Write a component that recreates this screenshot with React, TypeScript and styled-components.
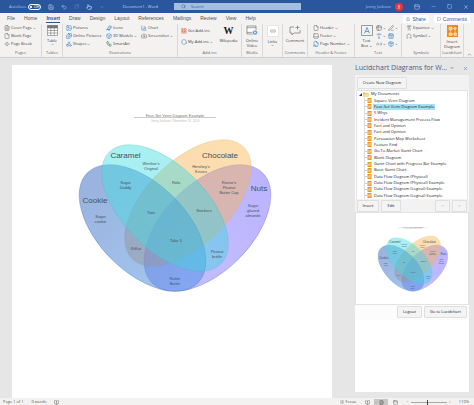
import React from "react";
import styled, { createGlobalStyle } from "styled-components";
import {
  Save, Undo2, RotateCw, Pointer, ChevronDown, ChevronUp, Search, Minus, Square, X, PanelTop, Share, MessageSquare,
  FileText, File as FileIcon, SeparatorHorizontal, Image as ImageIcon, Images, Shapes, Bird, Box as Cube, Workflow,
  ChartColumn, Camera, LayoutGrid, Hexagon, Link2, Omega, Pi, PanelBottom, FileDigit, Table2, PenLine, CalendarDays,
  CaseSensitive, Type, Package, Focus, BookOpen,
} from "lucide-react";

const Global = createGlobalStyle`
  * { box-sizing: border-box; }
  html, body, #root { height: 100%; }
  body { margin: 0; font-family: "Open Sans", "Noto Sans", sans-serif; font-size: 4px; line-height: 6px; color: #444; background: #e6e6e6; }
  button, input { font: inherit; color: inherit; padding: 0; margin: 0; border: 0; background: none; }
  ul { list-style: none; margin: 0; padding: 0; }
  svg { display: block; flex: none; }
`;
const Window = styled.div`display: flex; flex-direction: column; min-height: 100vh;`;

const TitleBar = styled.header`
  display: grid; grid-template-columns: 174fr 127fr 173fr; align-items: center;
  height: 13px; background: #2a569d; color: #c4d3ea;
`;
const QuickTools = styled.div`display: flex; align-items: center; gap: 7px; padding-left: 9px;`;
const AutoSave = styled.label`display: flex; align-items: center; gap: 2px; color: #a9c0e2;`;
const Toggle = styled.button`
  display: flex; align-items: center; gap: 2px; width: 13px; height: 6px; padding: 0 1px;
  border: 1px solid #fff; border-radius: 3px; color: #fff; line-height: 4px;
  &::before { content: ""; width: 2px; height: 2px; border-radius: 50%; background: #fff; }
`;
const IconButton = styled.button`display: grid; place-items: center; min-width: 5px;`;
const DocName = styled.span`margin-left: auto; padding-right: 16px; white-space: nowrap;`;
const SearchBox = styled.label`
  display: flex; align-items: center; gap: 5px; height: 7px; padding-left: 7px; background: #a5bddf; color: #2b579a;
  input { min-width: 0; flex: 1; outline: 0; }
  input::placeholder { color: #315a96; opacity: 1; }
`;
const WindowTools = styled.div`display: flex; align-items: center; justify-content: flex-end; gap: 11px; padding-right: 5px;`;
const Account = styled.button`display: flex; align-items: center; gap: 4px; color: #b3c7e6;`;
const Avatar = styled.span`width: 8px; height: 8px; border-radius: 50%; background: #e8353f; color: #fff; line-height: 8px; text-align: center;`;

const TabBar = styled.nav`display: flex; align-items: center; height: 11px; padding: 0 4px 0 7px; background: #f3f2f1;`;
const Tabs = styled.div`display: flex; flex: 1; gap: 9px; font-family: "Liberation Sans", sans-serif; font-size: 5px;`;
const Tab = styled.button<{ $active?: boolean }>`
  height: 9px; line-height: 7px; border-bottom: 1px solid ${p => (p.$active ? "#2b579a" : "transparent")};
  color: ${p => (p.$active ? "#2b579a" : "#555")}; font-weight: ${p => (p.$active ? 700 : 400)};
`;
const ActionButton = styled.button`
  display: flex; align-items: center; gap: 2px; height: 8px; padding: 0 3px; margin-left: 5px; background: #fff; color: #2b579a; border-radius: 1px;
  font-family: "Liberation Sans", sans-serif; font-size: 5px;
`;

const Ribbon = styled.section`
  display: grid; grid-template-columns: 42fr 21fr 115fr 64fr 21fr 20fr 25fr 47fr 47fr 39fr 23fr 10fr;
  height: 34px; background: #f3f2f1; border-bottom: 1px solid #d2d0ce;
`;
const Group = styled.section`
  display: flex; flex-direction: column; min-width: 0; padding-bottom: 1px; border-right: 1px solid #d9d8d7; white-space: nowrap;
  h2 { margin: 0; font-size: 4px; font-weight: 400; line-height: 6px; text-align: center; color: #666; }
`;
const GroupBody = styled.div<{ $pad?: number }>`display: flex; flex: 1; padding-left: ${p => p.$pad ?? 0}px;`;
const Stack = styled.div<{ $w?: number; $loose?: boolean }>`
  display: flex; flex-direction: column; width: ${p => (p.$w ? p.$w + "px" : "auto")};
  gap: ${p => (p.$loose ? 3 : 0)}px; padding-top: ${p => (p.$loose ? 3 : 0)}px;
`;
const SmallCommand = styled.button`
  display: flex; align-items: center; gap: 1px; height: 8px; text-align: left; white-space: nowrap;
`;
const BigCommand = styled.button`
  display: flex; flex: 1; flex-direction: column; align-items: center; justify-content: flex-start; padding-top: 1px; line-height: 5px;
  > svg, > i { margin-bottom: 2px; }
`;
const WikiMark = styled.i`height: 11px; font: 700 10px/12px "Liberation Serif", serif; color: #222;`;
const LinkTile = styled.i`display: grid; place-items: center; width: 12px; height: 12px; background: #fff; border: 1px solid #e6e6e6;`;
const Collapse = styled.button`align-self: end; justify-self: center;`;

const Work = styled.main`display: grid; grid-template-columns: minmax(0, 349fr) minmax(0, 125fr); flex: 1;`;
const Canvas = styled.div`display: flex; padding: 7px 17px 0 12px; background: #e6e6e6;`;
const Paper = styled.article`flex: 1; min-width: 0; background: #fff; svg { width: 100%; height: auto; }`;
const Panel = styled.aside`display: flex; flex-direction: column; padding: 4px 5px 6px 6px; background: #e6e6e6;`;
const PanelHeader = styled.header`
  display: flex; align-items: center; height: 12px; color: #44618f; white-space: nowrap;
  h1 { flex: 1; margin: 0; font-size: 7px; line-height: 12px; font-weight: 400; }
  button + button { margin: 0 1px 0 9px; }
`;
const PanelBody = styled.div`display: flex; flex: 1; flex-direction: column; background: #fff; margin-top: 1px;`;
const PanelBar = styled.div<{ $end?: boolean; $h: number }>`
  display: flex; align-items: center; gap: 2px; height: ${p => p.$h}px; padding: 0 2px;
  background: ${p => (p.$end ? "#fcfcfc" : "#f2f2f2")}; justify-content: ${p => (p.$end ? "flex-end" : "flex-start")};
`;
const PushButton = styled.button<{ $w: number; $faint?: boolean }>`
  width: ${p => p.$w}px; height: 12px; border: 1px solid #dfdfdf; border-radius: 1px; background: #f4f4f4;
  color: ${p => (p.$faint ? "#aaa" : "#222")}; white-space: nowrap;
`;
const Spacer = styled.span`flex: 1;`;
const TreeBox = styled.div`margin: 0 1px; border: 1px solid #e2e2e2; border-bottom: 0; padding: 0 0 0 2px;`;
const Tree = styled.ul`
  display: grid; grid-auto-rows: 1fr; height: 108px; color: #222;
  li { display: flex; align-items: center; min-height: 0; }
  li + li::before { content: ""; align-self: stretch; width: 1px; margin-left: 5px; background: #ddd; }
  li + li::after { content: ""; order: 1; width: 2px; height: 1px; background: #ccc; }
`;
const Node = styled.button<{ $on?: boolean }>`
  display: flex; order: 2; align-items: center; gap: 1px; white-space: nowrap;
  span { padding: 0 1px; background: ${p => (p.$on ? "#a5e0f3" : "transparent")}; }
`;
const Preview = styled.figure`
  margin: 0; border: 1px solid #e2e2e2; background: #fff; svg { width: 100%; height: auto; }
`;

const StatusBar = styled.footer`
  display: flex; align-items: center; gap: 8px; height: 7px; padding: 1px 5px 0 3px; background: #f3f2f1; color: #555;
`;
const ViewButton = styled.button<{ $on?: boolean }>`
  display: grid; place-items: center; width: 14px; height: 6px; margin: 0 -4px; background: ${p => (p.$on ? "#c8c6c4" : "transparent")};
`;
const ZoomControl = styled.label`display: flex; align-items: center; gap: 2px;`;
const ZoomSlider = styled.input`
  appearance: none; width: 36px; height: 5px;
  background: linear-gradient(#aaa, #aaa) center / 100% 1px no-repeat;
  &::-webkit-slider-thumb { appearance: none; width: 1px; height: 5px; background: #444; }
`;

const Down = () => <ChevronDown size={3} strokeWidth={3} />;

type CommandProps = { icon: React.ElementType; label?: string; menu?: boolean; tone?: string };
function Command({ icon: Icon, label, menu, tone = "#666" }: CommandProps) {
  return (
    <SmallCommand aria-label={label ? undefined : "Text option"}>
      <Icon size={6} strokeWidth={2} color={tone} />
      {label && <span>{label}</span>}
      {menu && <Down />}
    </SmallCommand>
  );
}

const LABELS: [number, number, string[]][] = [
  [151, 165, ["Werther's", "Original"]], [125.5, 184, ["Sugar", "Daddy"]], [176, 183.5, ["Rolo"]],
  [201, 168, ["Hershey's", "Kisses"]], [229, 183.5, ["Reese's", "Peanut", "Butter Cup"]],
  [100.5, 217.5, ["Sugar", "cookie"]], [151, 213.5, ["Twix"]], [204, 212, ["Snickers"]],
  [253, 207, ["Sugar", "glazed", "almonds"]], [176, 242, ["Take 5"]], [136, 250, ["KitKat"]],
  [217, 253, ["Peanut", "brittle"]], [175, 280, ["Nutter", "Butter"]],
];
type SetShape = { name: string; x: number; y: number; rx: number; ry: number; turn: number; from: string; to: string; alpha: number; line: string };
const SETS: SetShape[] = [
  { name: "nuts", x: 207.5, y: 228, rx: 78, ry: 44, turn: -45, from: "#8478ff", to: "#7262fb", alpha: 0.48, line: "#5a58c8" },
  { name: "chocolate", x: 188, y: 203, rx: 79, ry: 42, turn: -45, from: "#f0a860", to: "#fbb850", alpha: 0.46, line: "#e0b470" },
  { name: "cookie", x: 142.5, y: 228, rx: 78, ry: 44, turn: 45, from: "#3566bd", to: "#4690e2", alpha: 0.5, line: "#3564b5" },
  { name: "caramel", x: 165, y: 208, rx: 79, ry: 42, turn: 45, from: "#45dfe2", to: "#3fd3de", alpha: 0.46, line: "#48b8c0" },
];

function Venn({ viewBox, id }: { viewBox: string; id: string }) {
  return (
    <svg viewBox={viewBox} role="img" aria-label="Four-Set Venn Diagram Example" fontFamily="Liberation Sans, sans-serif" textAnchor="middle" fill="#45525c">
      <defs>
        {SETS.map(s => (
          <linearGradient key={s.name} id={`${id}-${s.name}`} x1={s.turn > 0 ? 0 : 0} x2="1" y1="0" y2="0">
            <stop stopColor={s.from} /><stop offset="1" stopColor={s.to} />
          </linearGradient>
        ))}
      </defs>
      <path d="M134 117.5H216" stroke="#aaa" strokeWidth=".6" />
      <text x="175" y="117" fontSize="4" fill="#777">Four-Set Venn Diagram Example</text>
      <text x="175" y="122" fontSize="3" fill="#bbb">Jenny Jackson | November 26, 2019</text>
      {SETS.map(s => (
        <ellipse key={s.name} rx={s.rx} ry={s.ry} transform={`translate(${s.x} ${s.y}) rotate(${s.turn})`} fill={`url(#${id}-${s.name})`} fillOpacity={s.alpha} stroke={s.line} strokeOpacity=".6" strokeWidth=".5" />
      ))}
      <g fontSize="8">
        <text x="125.500" y="158">Caramel</text>
        <text x="220" y="158">Chocolate</text>
        <text x="95" y="203">Cookie</text>
        <text x="259" y="191">Nuts</text>
      </g>
      <g fontSize="4">
        {LABELS.map(([x, y, lines]) => (
          <text key={lines.join()} y={y}>
            {lines.map((line, i) => <tspan key={line} x={x} dy={i ? 5 : 0}>{line}</tspan>)}
          </text>
        ))}
      </g>
    </svg>
  );
}

const GridIcon = () => (
  <svg width="11" height="11" viewBox="0 0 11 11" fill="#fff" stroke="#777" strokeWidth=".6">
    <path d="M.5.5h10v10H.5zM.5 5.500h10M.5 8h10M3.800 3v7.500M7.200 3v7.500" /><path d="M.5.5h10v2.500H.5z" fill="#777" />
  </svg>
);
const VideoIcon = () => (
  <svg width="12" height="11" viewBox="0 0 12 11" fill="#fff" stroke="#777" strokeWidth=".7">
    <path d="M1 1h9v8H1zM1 2.700h9M1 7.400h9" /><circle cx="9" cy="7.500" r="2.600" fill="#5b9bd5" stroke="#fff" /><path d="m8.300 6.300 2 1.200-2 1.200z" stroke="none" />
  </svg>
);
const CommentIcon = () => (
  <svg width="12" height="11" viewBox="0 0 12 11" fill="none" stroke="#777" strokeWidth=".7">
    <path d="M5 2H1v6h2v2l2-2h6V5" /><path d="M8.500.5v4M6.500 2.500h4" stroke="#2e9b6a" />
  </svg>
);
const TextBoxIcon = () => (
  <svg width="12" height="11" viewBox="0 0 12 11" fill="none" stroke="#777" strokeWidth=".7">
    <path d="M.5.5h11v10H.5z" /><path d="m3.500 8.500 2.500-6 2.500 6M4.400 6.500h3.200" stroke="#2f7fc4" />
  </svg>
);
const LucidIcon = () => (
  <svg width="11" height="12" viewBox="0 0 11 12">
    <path fill="#ee8a1d" d="M0 0h11v12H0z" />
    <path d="M2 2h3v3H2zM6.500 3.500 8 2l1.500 1.500L8 5zM2 8h3v2.500H2zM7 8h2.500v2.500H7zM5 3.500h1.500M8 5v3M5 9.200h2M3.500 5v3" fill="#fff" fillOpacity=".5" stroke="#fff" strokeWidth=".4" />
  </svg>
);
const DocIcon = () => (
  <svg width="5" height="5" viewBox="0 0 5 5"><path fill="#ef9420" d="M.5 0h4v5h-4z" /><path d="M1.500 1.500h2v1h-2v1h2" fill="none" stroke="#fff" strokeWidth=".4" /></svg>
);
const FolderIcon = () => (
  <svg width="6" height="5" viewBox="0 0 6 5"><path fill="#e8bd4c" d="M0 .5h2.300l.5.700H5.500v3.300H0z" /><path fill="#fbe08c" d="M.8 2H6l-.7 2.600H0z" /></svg>
);
const OpenArrow = () => <svg width="3" height="3" viewBox="0 0 3 3"><path d="M3 0v3H0z" fill="#333" /></svg>;

const DOCS = [
  "Square Venn Diagram", "Four-Set Venn Diagram Example", "5 Whys", "Incident Management Process Flow", "Fact and Opinion",
  "Fact and Opinion", "Persuasion Map Worksheet", "Feature Find", "Go-To-Market Gantt Chart", "Blank Diagram",
  "Gantt Chart with Progress Bar Example", "Basic Gantt Chart", "Data Flow Diagram (Physical)",
  "Data Flow Diagram (Physical) Example", "Data Flow Diagram (Logical) Example", "Data Flow Diagram (Logical) Example",
];
const TABS = ["File", "Home", "Insert", "Draw", "Design", "Layout", "References", "Mailings", "Review", "View", "Help"];
const BLUE = "#2f7fc4";

export default function App() {
  return (
    <Window>
      <Global />
      <TitleBar>
        <QuickTools>
          <AutoSave>AutoSave <Toggle role="switch" aria-checked={false}>Off</Toggle></AutoSave>
          <IconButton aria-label="Save"><Save size={6} /></IconButton>
          <IconButton aria-label="Undo"><Undo2 size={6} /></IconButton>
          <IconButton aria-label="Repeat"><RotateCw size={5} opacity={0.5} /></IconButton>
          <IconButton aria-label="Touch mode"><Pointer size={6} /></IconButton>
          <IconButton aria-label="Customize"><ChevronDown size={4} /></IconButton>
          <DocName>Document1 - Word</DocName>
        </QuickTools>
        <SearchBox><Search size={5} /><input aria-label="Search" placeholder="Search" /></SearchBox>
        <WindowTools>
          <Account>Jenny Jackson <Avatar>JJ</Avatar></Account>
          <IconButton aria-label="Ribbon display options"><PanelTop size={6} /></IconButton>
          <IconButton aria-label="Minimize"><Minus size={5} /></IconButton>
          <IconButton aria-label="Maximize"><Square size={5} /></IconButton>
          <IconButton aria-label="Close"><X size={6} /></IconButton>
        </WindowTools>
      </TitleBar>
      <TabBar>
        <Tabs>{TABS.map(t => <Tab key={t} $active={t === "Insert"}>{t}</Tab>)}</Tabs>
        <ActionButton><Share size={4} />Share</ActionButton>
        <ActionButton><MessageSquare size={4} />Comments</ActionButton>
      </TabBar>
      <Ribbon>
        <Group>
          <GroupBody $pad={4}><Stack>
            <Command icon={FileText} label="Cover Page" menu />
            <Command icon={FileIcon} label="Blank Page" />
            <Command icon={SeparatorHorizontal} label="Page Break" />
          </Stack></GroupBody>
          <h2>Pages</h2>
        </Group>
        <Group>
          <GroupBody><BigCommand><GridIcon />Table<Down /></BigCommand></GroupBody>
          <h2>Tables</h2>
        </Group>
        <Group>
          <GroupBody $pad={3}>
            <Stack $w={40}>
              <Command icon={ImageIcon} label="Pictures" tone={BLUE} />
              <Command icon={Images} label="Online Pictures" tone={BLUE} />
              <Command icon={Shapes} label="Shapes" menu tone={BLUE} />
            </Stack>
            <Stack $w={35}>
              <Command icon={Bird} label="Icons" tone={BLUE} />
              <Command icon={Cube} label="3D Models" menu tone={BLUE} />
              <Command icon={Workflow} label="SmartArt" tone="#3d8a63" />
            </Stack>
            <Stack>
              <Command icon={ChartColumn} label="Chart" tone={BLUE} />
              <Command icon={Camera} label="Screenshot" menu />
            </Stack>
          </GroupBody>
          <h2>Illustrations</h2>
        </Group>
        <Group>
          <GroupBody $pad={3}>
            <Stack $loose $w={35}>
              <Command icon={LayoutGrid} label="Get Add-ins" tone="#e0502f" />
              <Command icon={Hexagon} label="My Add-ins" menu tone={BLUE} />
            </Stack>
            <BigCommand><WikiMark>W</WikiMark>Wikipedia</BigCommand>
          </GroupBody>
          <h2>Add-ins</h2>
        </Group>
        <Group>
          <GroupBody><BigCommand><VideoIcon /><span>Online</span><span>Video</span></BigCommand></GroupBody>
          <h2>Media</h2>
        </Group>
        <Group>
          <GroupBody><BigCommand><LinkTile><Link2 size={6} color="#777" /></LinkTile>Links<Down /></BigCommand></GroupBody>
        </Group>
        <Group>
          <GroupBody><BigCommand><CommentIcon />Comment</BigCommand></GroupBody>
          <h2>Comments</h2>
        </Group>
        <Group>
          <GroupBody $pad={5}><Stack>
            <Command icon={FileIcon} label="Header" menu />
            <Command icon={PanelBottom} label="Footer" menu />
            <Command icon={FileDigit} label="Page Number" menu tone={BLUE} />
          </Stack></GroupBody>
          <h2>Header &amp; Footer</h2>
        </Group>
        <Group>
          <GroupBody $pad={2}>
            <BigCommand><TextBoxIcon /><span>Text</span><span>Box ⌄</span></BigCommand>
            <Stack $w={12}>
              <Command icon={Table2} menu /><Command icon={Type} menu tone={BLUE} /><Command icon={CaseSensitive} menu tone="#999" />
            </Stack>
            <Stack $w={13}>
              <Command icon={PenLine} menu /><Command icon={CalendarDays} tone={BLUE} /><Command icon={Package} menu tone={BLUE} />
            </Stack>
          </GroupBody>
          <h2>Text</h2>
        </Group>
        <Group>
          <GroupBody $pad={4}><Stack>
            <Command icon={Pi} label="Equation" menu />
            <Command icon={Omega} label="Symbol" menu />
          </Stack></GroupBody>
          <h2>Symbols</h2>
        </Group>
        <Group>
          <GroupBody><BigCommand><LucidIcon /><span>Insert</span><span>Diagram</span></BigCommand></GroupBody>
          <h2>Lucidchart</h2>
        </Group>
        <Collapse aria-label="Collapse ribbon"><ChevronUp size={5} /></Collapse>
      </Ribbon>
      <Work>
        <Canvas><Paper><Venn id="page" viewBox="12 65 320 240" /></Paper></Canvas>
        <Panel>
          <PanelHeader>
            <h1>Lucidchart Diagrams for W...</h1>
            <IconButton aria-label="Pane options"><ChevronDown size={4} strokeWidth={4} /></IconButton>
            <IconButton aria-label="Close pane"><X size={5} /></IconButton>
          </PanelHeader>
          <PanelBody>
            <PanelBar $h={15}><PushButton $w={50}>Create New Diagram</PushButton></PanelBar>
            <TreeBox><Tree>
              <li><Node><OpenArrow /><FolderIcon /><span>My Documents</span></Node></li>
              {DOCS.map((d, i) => <li key={i}><Node $on={i === 1}><DocIcon /><span>{d}</span></Node></li>)}
            </Tree></TreeBox>
            <PanelBar $h={13}>
              <PushButton $w={22}>Insert</PushButton><PushButton $w={20}>Edit</PushButton>
              <Spacer />
              <PushButton $w={15} $faint>«</PushButton><PushButton $w={15} $faint>»</PushButton>
            </PanelBar>
            <Preview><Venn id="preview" viewBox="19 77 307 249" /></Preview>
            <PanelBar $h={15} $end><PushButton $w={25}>Logout</PushButton><PushButton $w={43}>Go to Lucidchart</PushButton></PanelBar>
          </PanelBody>
        </Panel>
      </Work>
      <StatusBar>
        <span>Page 1 of 1</span><span>0 words</span><BookOpen size={5} />
        <Spacer />
        <SmallCommand><Focus size={4} />Focus</SmallCommand>
        <ViewButton aria-label="Read mode"><BookOpen size={5} /></ViewButton>
        <ViewButton aria-label="Print layout" $on><FileText size={5} /></ViewButton>
        <ViewButton aria-label="Web layout"><PanelTop size={5} /></ViewButton>
        <ZoomControl>−<ZoomSlider type="range" aria-label="Zoom" min={0} max={100} defaultValue={46} />+</ZoomControl>
        <span>110%</span>
      </StatusBar>
    </Window>
  );
}
